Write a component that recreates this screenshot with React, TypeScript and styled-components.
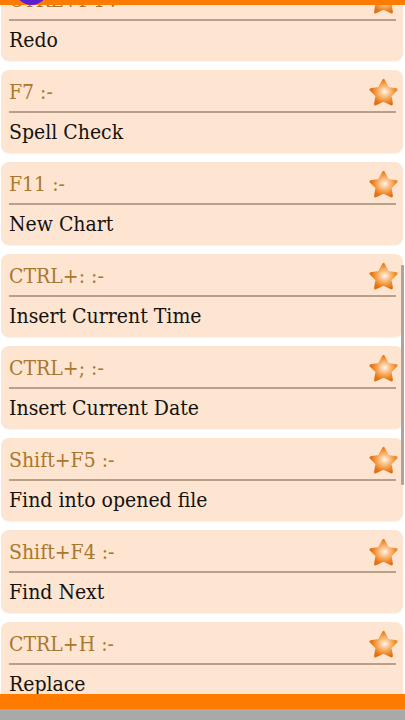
import React from "react";
import styled, { createGlobalStyle } from "styled-components";

const Global = createGlobalStyle`
  html, body { margin: 0; padding: 0; background: #ffffff; }
  body { font-family: "DejaVu Serif", "Liberation Serif", serif; }
`;

const Screen = styled.div`
  width: 405px;
  height: 720px;
  display: flex;
  flex-direction: column;
  position: relative;
  overflow: hidden;
  background: #ffffff;
`;

const TopBar = styled.div`
  height: 5px;
  flex: none;
  background: #ff7b00;
  position: relative;
  z-index: 2;
`;

const FloatingDot = styled.div`
  position: absolute;
  left: 15px;
  top: -28px;
  width: 33px;
  height: 33px;
  border-radius: 50%;
  background: #5b1fd3;
  z-index: 3;
`;

const Content = styled.div`
  flex: 1;
  overflow: hidden;
  position: relative;
`;

const List = styled.div`
  display: flex;
  flex-direction: column;
  gap: 9px;
  margin-top: -27px;
  padding: 0 2px 0 1px;
`;

const Card = styled.div`
  background: #fde5d1;
  border-radius: 8px;
  padding: 8px 7px 7px 8px;
  box-shadow: 0 1px 1px rgba(120, 80, 40, 0.06);
`;

const Header = styled.div`
  display: flex;
  justify-content: space-between;
  align-items: flex-start;
  height: 33px;
`;

const Keys = styled.div`
  font-family: "DejaVu Serif", "Liberation Serif", serif;
  font-stretch: condensed;
  font-size: 21px;
  line-height: 28px;
  color: #aa772e;
  white-space: nowrap;
`;

const StarBox = styled.div`
  width: 31px;
  height: 31px;
  margin-right: -3px;
  margin-top: -1px;
  flex: none;
`;

const Divider = styled.div`
  height: 2px;
  background: #b9a08d;
`;

const Action = styled.div`
  margin-top: 5px;
  font-family: "DejaVu Serif", "Liberation Serif", serif;
  font-stretch: condensed;
  font-size: 21px;
  line-height: 28px;
  color: #141210;
  white-space: nowrap;
`;

const Scrollbar = styled.div`
  position: absolute;
  right: 1px;
  top: 260px;
  width: 3px;
  height: 220px;
  background: #ada49d;
  border-radius: 1px;
`;

const BottomBar = styled.div`
  height: 15px;
  flex: none;
  background: #ff7b00;
`;

const NavBar = styled.div`
  height: 11px;
  flex: none;
  background: #a9a9a9;
`;

const Star: React.FC<{ id: string }> = ({ id }) => (
  <svg width="31" height="31" viewBox="0 0 30 30">
    <defs>
      <radialGradient id={id} cx="0.55" cy="0.48" r="0.55">
        <stop offset="0" stopColor="#fff6ee" />
        <stop offset="0.3" stopColor="#fcc996" />
        <stop offset="0.7" stopColor="#f39438" />
        <stop offset="1" stopColor="#e46e12" />
      </radialGradient>
    </defs>
    <path
      d="M15 3.2 L19.2 11 L27.3 12.2 L21.5 18 L22.8 26.2 L15 22.6 L7.2 26.2 L8.5 18 L2.7 12.2 L10.8 11 Z"
      fill={`url(#${id})`}
      stroke={`url(#${id})`}
      strokeWidth="2.6"
      strokeLinejoin="round"
    />
  </svg>
);

const items: { keys: string; action: string }[] = [
  { keys: "CTRL+F4 :-", action: "Redo" },
  { keys: "F7 :-", action: "Spell Check" },
  { keys: "F11 :-", action: "New Chart" },
  { keys: "CTRL+: :-", action: "Insert Current Time" },
  { keys: "CTRL+; :-", action: "Insert Current Date" },
  { keys: "Shift+F5 :-", action: "Find into opened file" },
  { keys: "Shift+F4 :-", action: "Find Next" },
  { keys: "CTRL+H :-", action: "Replace" },
];

export default function App() {
  return (
    <Screen>
      <Global />
      <TopBar>
        <FloatingDot />
      </TopBar>
      <Content>
        <List>
          {items.map((it, i) => (
            <Card key={i}>
              <Header>
                <Keys>{it.keys}</Keys>
                <StarBox>
                  <Star id={`star${i}`} />
                </StarBox>
              </Header>
              <Divider />
              <Action>{it.action}</Action>
            </Card>
          ))}
        </List>
        <Scrollbar />
      </Content>
      <BottomBar />
      <NavBar />
    </Screen>
  );
}
